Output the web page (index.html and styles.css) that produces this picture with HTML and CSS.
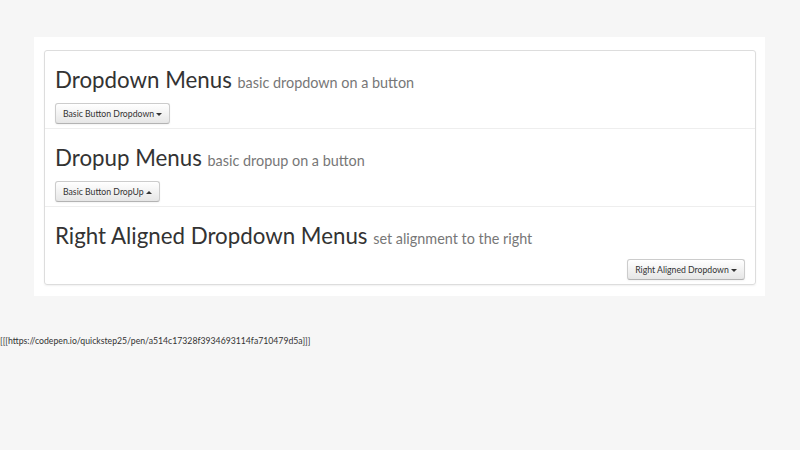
FILE: index.html
```html
<!DOCTYPE html>
<html lang="en">
  <head>
    <meta charset="UTF-8" />
    <meta name="viewport" content="width=device-width, initial-scale=1.0" />
    <title>Dropdown Menus</title>
    <link rel="stylesheet" href="styles.css">
  </head>
  <body>
    <div class="wrap">
      <div class="panel">
        <div class="section">
          <h2 class="title">Dropdown Menus <small>basic dropdown on a button</small></h2>
          <button class="btn">Basic Button Dropdown <span class="caret"></span></button>
        </div>
        <div class="section">
          <h2 class="title">Dropup Menus <small>basic dropup on a button</small></h2>
          <button class="btn">Basic Button DropUp <span class="caret up"></span></button>
        </div>
        <div class="section right">
          <h2 class="title">Right Aligned Dropdown Menus <small>set alignment to the right</small></h2>
          <button class="btn">Right Aligned Dropdown <span class="caret"></span></button>
        </div>
      </div>
    </div>
    <p class="link">[[[https://codepen.io/quickstep25/pen/a514c17328f3934693114fa710479d5a]]]</p>
  </body>
</html>
```

FILE: styles.css
```css
body {
  margin: 0;
  padding-top: 37px;
  background-color: #f6f6f6;
  font-family: Lato, "Open Sans", sans-serif;
  color: #333;
}
.wrap {
  width: 712px;
  margin-left: 34px;
  padding: 13px 9px 11px 10px;
  background-color: #fff;
}
.panel {
  border: 1px solid #ddd;
  border-radius: 3px;
  box-shadow: 0 1px 2px rgba(0, 0, 0, 0.06);
}
.section {
  height: 61px;
  padding: 16px 10px 0;
  border-top: 1px solid #eee;
}
.section:first-child {
  border-top: none;
}
.section.right .btn {
  margin-left: auto;
}
.title {
  margin: 0 0 7px;
  font-size: 22.3px;
  font-weight: 400;
  line-height: 26px;
  color: #333;
}
.title small {
  font-size: 14.4px;
  color: #777;
}
.btn {
  display: block;
  height: 21px;
  padding: 0 7px;
  font-family: Lato, "Open Sans", sans-serif;
  font-size: 8.7px;
  color: #333;
  background-image: linear-gradient(#fff, #e6e6e6);
  border: 1px solid #ccc;
  border-bottom-color: #b3b3b3;
  border-radius: 3px;
  box-shadow: inset 0 1px 0 rgba(255, 255, 255, 0.2), 0 1px 2px rgba(0, 0, 0, 0.05);
  cursor: pointer;
}
.caret {
  display: inline-block;
  width: 0;
  height: 0;
  vertical-align: middle;
  border-top: 3px solid #333;
  border-left: 3px solid transparent;
  border-right: 3px solid transparent;
}
.caret.up {
  border-top: none;
  border-bottom: 3px solid #333;
}
.link {
  margin: 39px 0 0;
  font-size: 8.7px;
  color: #333;
}
```
